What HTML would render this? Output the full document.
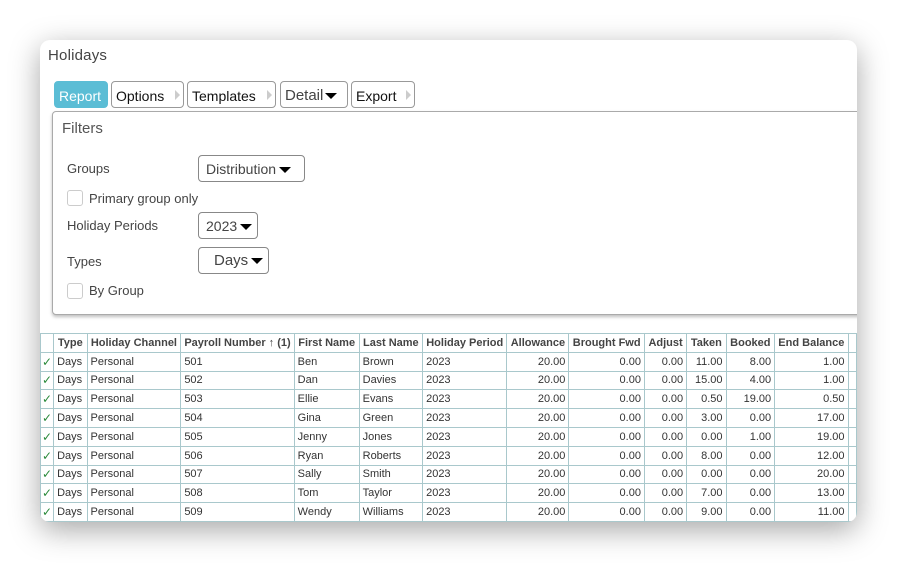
<!DOCTYPE html>
<html><head><meta charset="utf-8"><style>
body{margin:0;width:897px;height:564px;background:#fff;font-family:"Liberation Sans",sans-serif;position:relative;overflow:hidden}
.card{position:absolute;left:40px;top:40px;width:817px;height:482px;background:#fff;border-radius:10px;box-shadow:0 8px 30px rgba(0,0,0,.35);overflow:hidden}
.title{position:absolute;left:8px;top:7px;font-size:15px;color:#444;letter-spacing:.2px}
.btn{position:absolute;top:41px;height:27px;box-sizing:border-box;border:1px solid #999;border-radius:4px;background:#fff;font-size:14px;line-height:28px;padding-left:4px;color:#111}
.btn .ar{position:absolute;right:3px;top:8px;width:0;height:0;border-left:5px solid #ccc;border-top:5px solid transparent;border-bottom:5px solid transparent}
.btn .dn{display:inline-block;width:0;height:0;border-top:6px solid #000;border-left:6px solid transparent;border-right:6px solid transparent;vertical-align:middle;margin-left:2px}
.filters{position:absolute;left:12px;top:71px;width:820px;height:202px;border:1px solid #aaa;border-radius:4px;box-shadow:0 2px 3px rgba(0,0,0,.25);background:#fff}
.ft{position:absolute;left:9px;top:8px;font-size:15px;color:#555}
.lbl{position:absolute;font-size:13px;color:#444}
.sel{position:absolute;height:27px;box-sizing:border-box;border:1px solid #888;border-radius:4px;font-size:14px;color:#444;line-height:26px;padding-left:7px}
.sel .dn{display:inline-block;width:0;height:0;border-top:6px solid #000;border-left:6px solid transparent;border-right:6px solid transparent;vertical-align:middle;margin-left:3px}
.cb{position:absolute;width:16px;height:16px;border:1px solid #ccc;border-radius:3px;box-sizing:border-box}
table{position:absolute;left:0;top:293px;border-collapse:collapse;font-size:11px;color:#333}
td,th{border:1px solid #a9c8cc;height:17.8px;padding:0 3px;white-space:nowrap}
th{font-weight:bold;color:#444;background:#fff;text-align:center;font-size:11px}
td.n{text-align:right}
td.c{padding:0 1px;color:#2a8a3a;font-size:12px;text-align:center}
</style></head><body>
<div class="card">
<div class="title">Holidays</div>
<div class="btn" style="left:14px;width:54px;background:#5bbdd5;color:#fff;border-color:#5bbdd5">Report</div>
<div class="btn" style="left:71px;width:73px">Options<span class="ar"></span></div>
<div class="btn" style="left:147px;width:89px">Templates<span class="ar"></span></div>
<div class="btn" style="left:240px;width:68px;font-size:15px;color:#444">Detail<span class="dn"></span></div>
<div class="btn" style="left:311px;width:64px">Export<span class="ar"></span></div>
<div class="filters">
<div class="ft">Filters</div>
<div class="lbl" style="left:14px;top:49px">Groups</div>
<div class="sel" style="left:145px;top:43px;width:107px">Distribution<span class="dn"></span></div>
<div class="cb" style="left:14px;top:78px"></div>
<div class="lbl" style="left:36px;top:79px">Primary group only</div>
<div class="lbl" style="left:14px;top:106px">Holiday Periods</div>
<div class="sel" style="left:145px;top:100px;width:60px">2023<span class="dn"></span></div>
<div class="lbl" style="left:14px;top:142px">Types</div>
<div class="sel" style="left:145px;top:135px;width:71px;padding-left:15px;font-size:15px">Days<span class="dn"></span></div>
<div class="cb" style="left:14px;top:171px"></div>
<div class="lbl" style="left:36px;top:171px">By Group</div>
</div>
<table>
<tr><th style="width:6px"></th><th style="width:29px">Type</th><th style="width:88px">Holiday Channel</th><th style="width:106px">Payroll Number ↑ (1)</th><th style="width:60px">First Name</th><th style="width:58px">Last Name</th><th style="width:78px">Holiday Period</th><th style="width:56px">Allowance</th><th style="width:70px">Brought Fwd</th><th style="width:37px">Adjust</th><th style="width:35px">Taken</th><th style="width:44px">Booked</th><th style="width:67px">End Balance</th><th style="width:4px"></th></tr>
<tr><td class="c">✓</td><td>Days</td><td>Personal</td><td>501</td><td>Ben</td><td>Brown</td><td>2023</td><td class="n">20.00</td><td class="n">0.00</td><td class="n">0.00</td><td class="n">11.00</td><td class="n">8.00</td><td class="n">1.00</td><td></td></tr>
<tr><td class="c">✓</td><td>Days</td><td>Personal</td><td>502</td><td>Dan</td><td>Davies</td><td>2023</td><td class="n">20.00</td><td class="n">0.00</td><td class="n">0.00</td><td class="n">15.00</td><td class="n">4.00</td><td class="n">1.00</td><td></td></tr>
<tr><td class="c">✓</td><td>Days</td><td>Personal</td><td>503</td><td>Ellie</td><td>Evans</td><td>2023</td><td class="n">20.00</td><td class="n">0.00</td><td class="n">0.00</td><td class="n">0.50</td><td class="n">19.00</td><td class="n">0.50</td><td></td></tr>
<tr><td class="c">✓</td><td>Days</td><td>Personal</td><td>504</td><td>Gina</td><td>Green</td><td>2023</td><td class="n">20.00</td><td class="n">0.00</td><td class="n">0.00</td><td class="n">3.00</td><td class="n">0.00</td><td class="n">17.00</td><td></td></tr>
<tr><td class="c">✓</td><td>Days</td><td>Personal</td><td>505</td><td>Jenny</td><td>Jones</td><td>2023</td><td class="n">20.00</td><td class="n">0.00</td><td class="n">0.00</td><td class="n">0.00</td><td class="n">1.00</td><td class="n">19.00</td><td></td></tr>
<tr><td class="c">✓</td><td>Days</td><td>Personal</td><td>506</td><td>Ryan</td><td>Roberts</td><td>2023</td><td class="n">20.00</td><td class="n">0.00</td><td class="n">0.00</td><td class="n">8.00</td><td class="n">0.00</td><td class="n">12.00</td><td></td></tr>
<tr><td class="c">✓</td><td>Days</td><td>Personal</td><td>507</td><td>Sally</td><td>Smith</td><td>2023</td><td class="n">20.00</td><td class="n">0.00</td><td class="n">0.00</td><td class="n">0.00</td><td class="n">0.00</td><td class="n">20.00</td><td></td></tr>
<tr><td class="c">✓</td><td>Days</td><td>Personal</td><td>508</td><td>Tom</td><td>Taylor</td><td>2023</td><td class="n">20.00</td><td class="n">0.00</td><td class="n">0.00</td><td class="n">7.00</td><td class="n">0.00</td><td class="n">13.00</td><td></td></tr>
<tr><td class="c">✓</td><td>Days</td><td>Personal</td><td>509</td><td>Wendy</td><td>Williams</td><td>2023</td><td class="n">20.00</td><td class="n">0.00</td><td class="n">0.00</td><td class="n">9.00</td><td class="n">0.00</td><td class="n">11.00</td><td></td></tr>
<tr><td></td><td></td><td></td><td></td><td></td><td></td><td></td><td></td><td></td><td></td><td></td><td></td><td></td><td></td></tr>
</table>
</div>
</body></html>
